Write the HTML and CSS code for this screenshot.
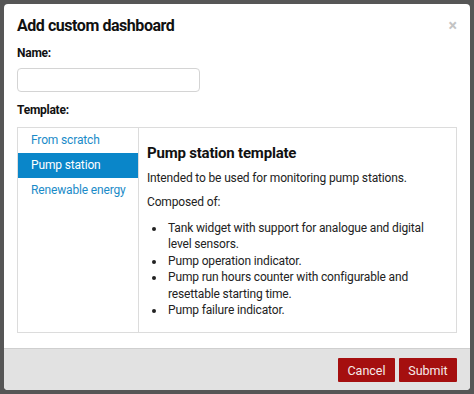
FILE: index.html
```html
<!DOCTYPE html>
<html>
<head>
<meta charset="utf-8">
<link rel="stylesheet" href="styles.css">
</head>
<body>
<div class="dialog">
  <div class="body">
    <div class="header">
      <h1 class="title">Add custom dashboard</h1>
      <span class="close">×</span>
    </div>
    <label class="label label-name">Name:</label>
    <input class="input" type="text">
    <label class="label label-template">Template:</label>
    <div class="templates">
      <ul class="menu">
        <li class="item">From scratch</li>
        <li class="item active">Pump station</li>
        <li class="item">Renewable energy</li>
      </ul>
      <div class="panel">
        <h2 class="panel-title">Pump station template</h2>
        <p class="para">Intended to be used for monitoring pump stations.</p>
        <p class="para">Composed of:</p>
        <ul class="list">
          <li>Tank widget with support for analogue and digital level sensors.</li>
          <li>Pump operation indicator.</li>
          <li>Pump run hours counter with configurable and resettable starting time.</li>
          <li>Pump failure indicator.</li>
        </ul>
      </div>
    </div>
  </div>
  <div class="footer">
    <button class="btn">Cancel</button>
    <button class="btn">Submit</button>
  </div>
</div>
</body>
</html>
```
FILE: styles.css
```css
html, body {
  margin: 0;
  padding: 0;
  background: #565656;
  height: 100%;
}
body {
  font-family: Roboto, "Liberation Sans", sans-serif;
  color: #222;
  padding: 4px;
  box-sizing: border-box;
}
.dialog {
  background: #fff;
  border-radius: 4px;
  height: 386px;
  display: flex;
  flex-direction: column;
  overflow: hidden;
}
.body {
  flex: 1;
  padding: 12px 13px 0 13px;
  display: flex;
  flex-direction: column;
}
.header {
  display: flex;
  justify-content: space-between;
  align-items: flex-start;
}
.title {
  margin: 0;
  font-size: 16px;
  letter-spacing: -0.45px;
  line-height: 20px;
  font-weight: 700;
  color: #111;
}
.close {
  font-size: 16px;
  line-height: 18px;
  font-weight: 700;
  color: #c4c4c4;
  margin-top: 1px;
  margin-right: 0px;
}
.label {
  display: block;
  font-size: 12px;
  letter-spacing: -0.25px;
  line-height: 16px;
  font-weight: 700;
  color: #111;
}
.label-name {
  margin-top: 9px;
}
.input {
  margin-top: 7px;
  width: 183px;
  height: 24px;
  box-sizing: border-box;
  border: 1px solid #d4d4d4;
  border-radius: 4px;
  padding: 0 6px;
  font-family: inherit;
}
.label-template {
  margin-top: 10px;
}
.templates {
  margin-top: 9px;
  height: 206px;
  box-sizing: border-box;
  border: 1px solid #dcdcdc;
  display: flex;
}
.menu {
  list-style: none;
  margin: 0;
  padding: 0;
  width: 120px;
  border-right: 1px solid #dcdcdc;
}
.item {
  font-size: 12px;
  letter-spacing: -0.15px;
  line-height: 25px;
  padding-left: 13px;
  color: #1b8bc8;
}
.item.active {
  background: #0a86c9;
  color: #fff;
}
.panel {
  flex: 1;
  padding: 16px 8px 0 8px;
  font-size: 12px;
  letter-spacing: -0.15px;
  color: #222;
}
.panel-title {
  margin: 0;
  font-size: 15px;
  letter-spacing: -0.2px;
  line-height: 18px;
  font-weight: 700;
  color: #111;
}
.para {
  margin: 8px 0 0;
  line-height: 16px;
}
.list {
  list-style: none;
  margin: 10px 0 0;
  padding-left: 21px;
  line-height: 16.4px;
}
.list li {
  position: relative;
}
.list li::before {
  content: "";
  position: absolute;
  left: -16px;
  top: 7px;
  width: 4px;
  height: 4px;
  border-radius: 50%;
  background: #222;
}
.footer {
  height: 42px;
  box-sizing: border-box;
  border-top: 1px solid #cfcfcf;
  background: #e2e2e2;
  display: flex;
  justify-content: flex-end;
  align-items: flex-start;
  gap: 4px;
  padding: 9px 13px 0 0;
}
.btn {
  height: 24px;
  border: none;
  background: #a50f0f;
  color: #f6eaea;
  font-family: inherit;
  font-size: 12.5px;
  padding: 0;
  width: 57px;
  border-radius: 1px;
}
.btn + .btn {
  width: 58px;
}
```
